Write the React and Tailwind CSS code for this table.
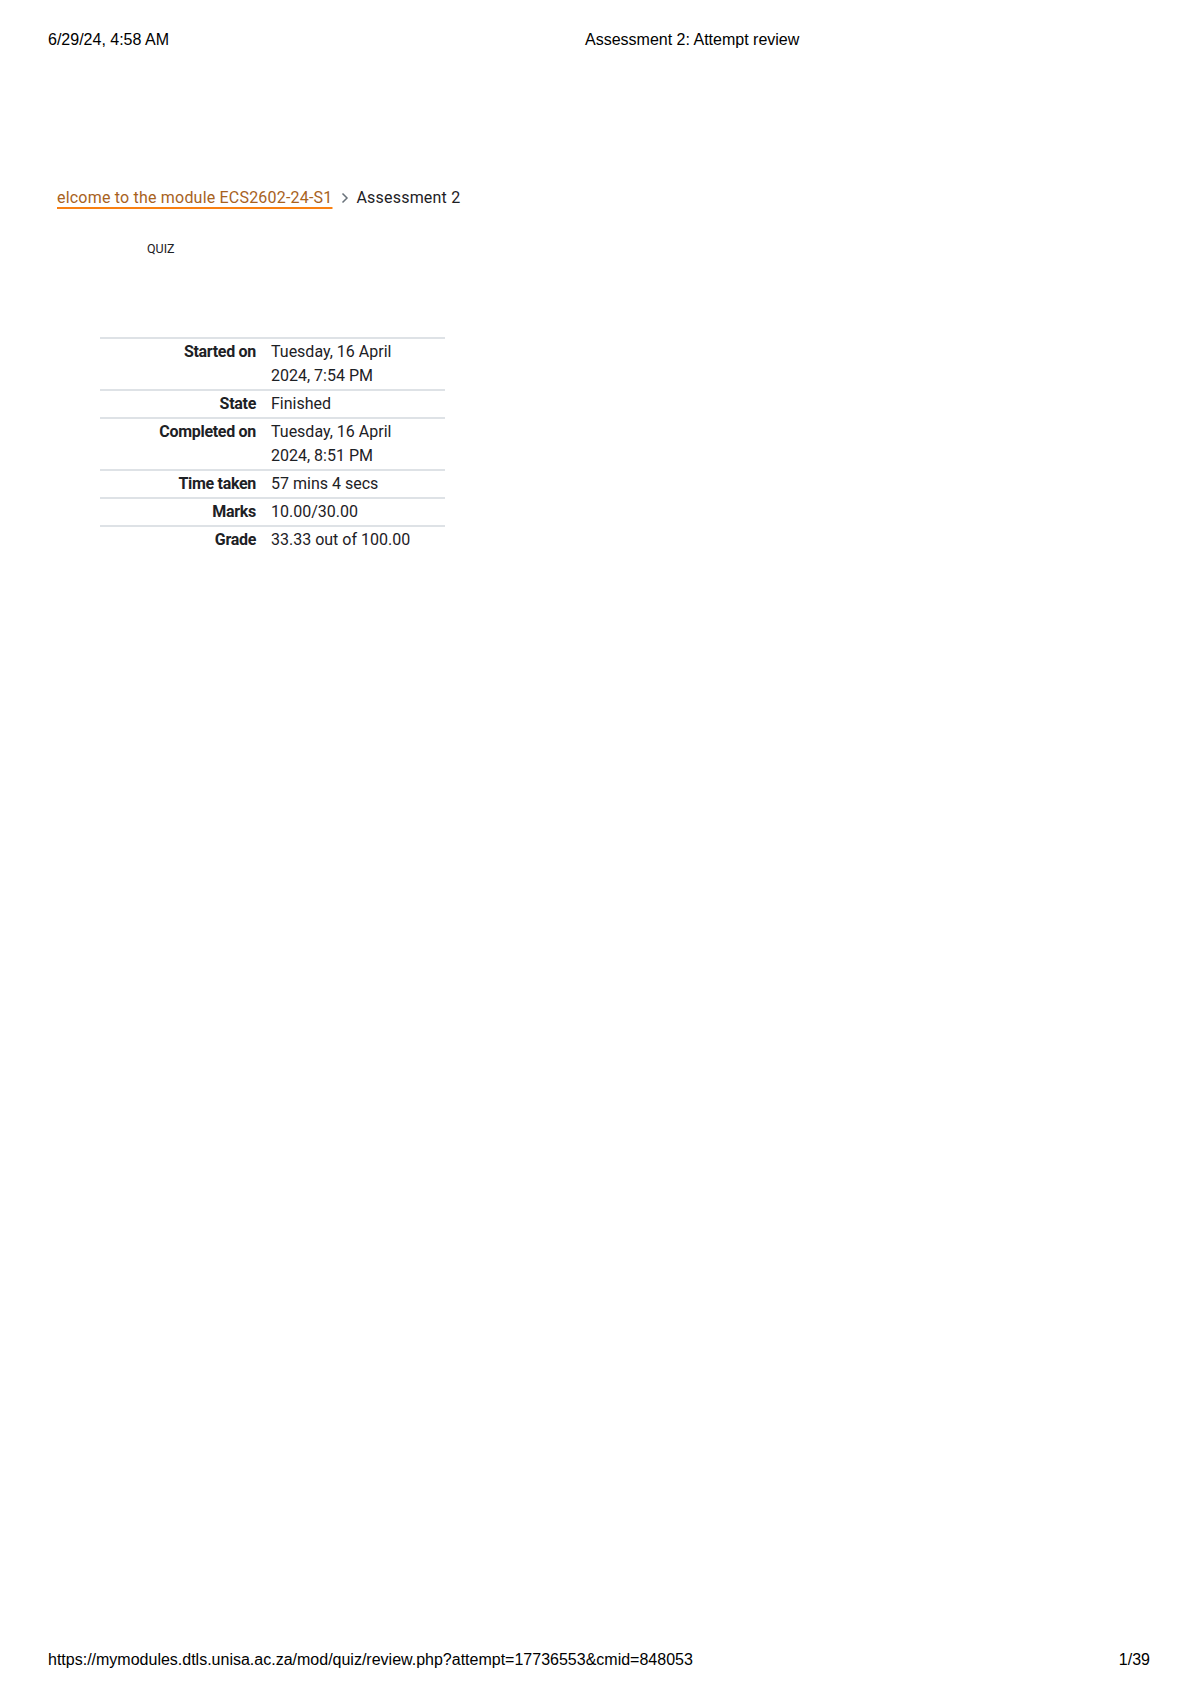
const rows = [
  { label: 'Started on', value: ['Tuesday, 16 April', '2024, 7:54 PM'] },
  { label: 'State', value: ['Finished'] },
  { label: 'Completed on', value: ['Tuesday, 16 April', '2024, 8:51 PM'] },
  { label: 'Time taken', value: ['57 mins 4 secs'] },
  { label: 'Marks', value: ['10.00/30.00'] },
  { label: 'Grade', value: ['33.33 out of 100.00'] },
];

const SummaryRow = ({ row }) => (
  <div className="flex border-t-2 border-[#dee2e6] py-[1px] leading-[24px]">
    <div className="w-[171px] shrink-0 pr-[15px] text-right font-bold text-[#1d2125] tracking-[-0.3px]">{row.label}</div>
    <div className="text-[#1d2125]">
      {row.value.map((line) => (
        <div key={line}>{line}</div>
      ))}
    </div>
  </div>
);

export default function App() {
  return (
    <div className="min-h-[1698px] w-[1200px] bg-white flex flex-col">
      <header className="flex items-center pt-[32px] pl-[48px] text-[16px] leading-[16px] text-black font-['Liberation_Sans',Arial,sans-serif]">
        <span>6/29/24, 4:58 AM</span>
        <span className="ml-[416px]">Assessment 2: Attempt review</span>
      </header>

      <main className="flex-1 font-['Roboto',sans-serif] text-[16px]">
        <nav className="flex items-center pl-[57px] mt-[140px] leading-[20px] tracking-[0.2px]">
          <a href="#" className="text-[#a8621d] underline decoration-[#f98012] decoration-[1.5px] underline-offset-[4px]">
            elcome to the module ECS2602-24-S1
          </a>
          <svg width="16" height="16" viewBox="0 0 16 16" className="ml-[5px] mr-[3px]">
            <path d="M5.5 3.5 L10 8 L5.5 12.5" fill="none" stroke="#6a737b" strokeWidth="1.5" />
          </svg>
          <span className="text-[#1d2125]">Assessment 2</span>
        </nav>

        <div className="pl-[147px] mt-[33px] text-[12.5px] leading-[16px] text-[#1d2125]">QUIZ</div>

        <section className="ml-[100px] mt-[80px] w-[345px]">
          {rows.map((row) => (
            <SummaryRow key={row.label} row={row} />
          ))}
        </section>
      </main>

      <footer className="flex items-center justify-between pl-[48px] pr-[50px] pb-[30px] text-[16px] leading-[16px] text-black font-['Liberation_Sans',Arial,sans-serif]">
        <span>https://mymodules.dtls.unisa.ac.za/mod/quiz/review.php?attempt=17736553&amp;cmid=848053</span>
        <span>1/39</span>
      </footer>
    </div>
  );
}
